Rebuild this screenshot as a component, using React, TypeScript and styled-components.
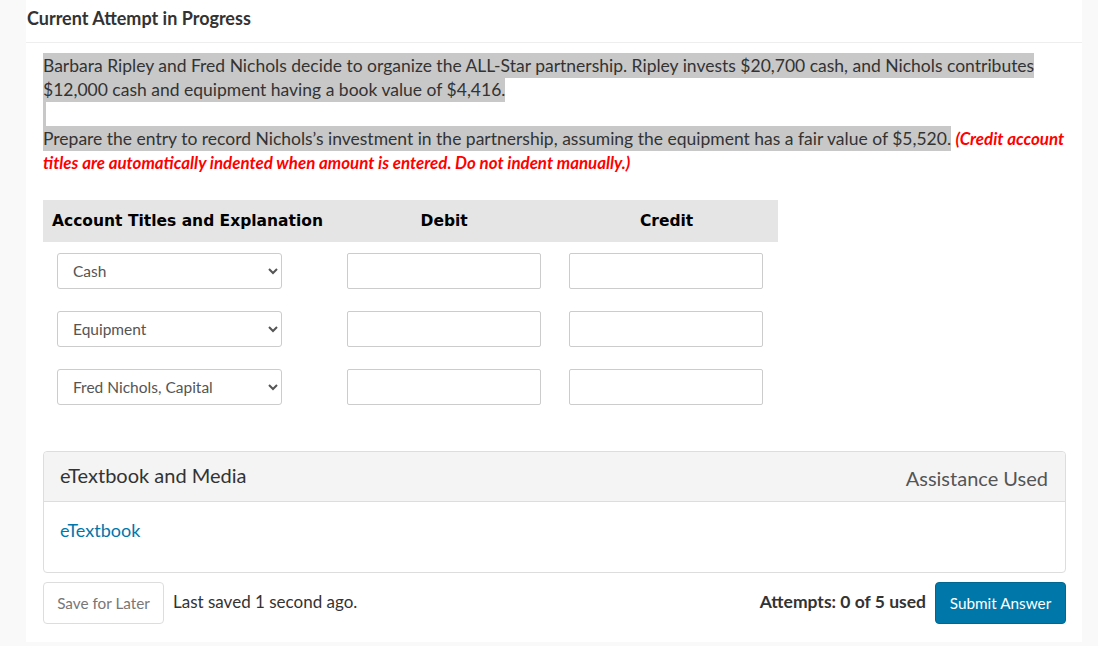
import React from "react";
import styled, { createGlobalStyle } from "styled-components";

const GlobalStyle = createGlobalStyle`
  body {
    margin: 0;
    background: #f9f9f9;
    font-family: Lato, "Open Sans", sans-serif;
    color: #333;
  }
`;

const Card = styled.div`
  width: 1056px;
  margin-left: 26px;
  background: #fff;
  padding-bottom: 18px;
`;

const CardHeader = styled.div`
  height: 35px;
  padding: 7px 1px 0;
  border-bottom: 1px solid #eee;
  font-size: 18px;
  font-weight: 700;
  color: #333;
`;

const CardBody = styled.div`
  padding: 11px 16px 0 17px;
`;

const Question = styled.div`
  font-size: 17.5px;
  line-height: 24px;
  color: #333;
`;

const Marked = styled.span`
  background: #c8c8c8;
  padding: 2px 0;
  box-decoration-break: clone;
  -webkit-box-decoration-break: clone;
`;

const Gap = styled.div<{ $bar?: boolean }>`
  height: 25px;
  width: 3px;
  background: ${(p) => (p.$bar ? "#c8c8c8" : "transparent")};
`;

const Hint = styled.span`
  color: #f00;
  font-size: 16.9px;
  font-style: italic;
  font-weight: 700;
`;

const Table = styled.table`
  margin-top: 25px;
  border-collapse: collapse;
  width: 735px;
`;

const Th = styled.th<{ $w: number; $align?: string }>`
  width: ${(p) => p.$w}px;
  height: 42px;
  background: #e5e5e5;
  font-family: "DejaVu Sans", Verdana, sans-serif;
  font-size: 15.5px;
  font-weight: 700;
  color: #000;
  text-align: ${(p) => p.$align || "center"};
  padding: 0 0 0 ${(p) => (p.$align === "left" ? 9 : 0)}px;
`;

const Td = styled.td`
  padding: 11px 14px;
`;

const Select = styled.select`
  width: 225px;
  height: 36px;
  border: 1px solid #ccc;
  border-radius: 3px;
  background: #fff;
  padding: 0 10px 0 11px;
  font-family: Lato, sans-serif;
  font-size: 15.5px;
  color: #555;
`;

const Amount = styled.input`
  box-sizing: border-box;
  width: 194px;
  height: 36px;
  border: 1px solid #ccc;
  border-radius: 2px;
  background: #fff;
  padding: 0 8px;
`;

const Panel = styled.div`
  margin-top: 35px;
  border: 1px solid #ddd;
  border-radius: 4px;
`;

const PanelHead = styled.div`
  height: 49px;
  background: #f4f4f4;
  border-bottom: 1px solid #ddd;
  display: flex;
  justify-content: space-between;
  align-items: center;
  padding: 0 17px 0 16px;
  border-radius: 4px 4px 0 0;
`;

const PanelTitle = styled.span`
  font-size: 20px;
  color: #333;
  margin-top: -4px;
`;

const Assist = styled.span`
  font-size: 20px;
  color: #555;
  margin-top: 2px;
`;

const PanelBody = styled.div`
  height: 70px;
  padding: 0 16px;
  display: flex;
  align-items: center;
`;

const Link = styled.a`
  font-size: 18px;
  color: #0077aa;
  text-decoration: none;
  margin-top: -14px;
`;

const Footer = styled.div`
  margin-top: 9px;
  display: flex;
  align-items: center;
`;

const SaveBtn = styled.button`
  width: 121px;
  height: 42px;
  border: 1px solid #ddd;
  border-radius: 4px;
  background: #fff;
  font-family: Lato, sans-serif;
  font-size: 15.3px;
  color: #777;
  padding: 0;
`;

const Saved = styled.span`
  font-size: 17px;
  color: #333;
  margin-left: 9px;
  margin-top: -3px;
`;

const Attempts = styled.span`
  margin-left: auto;
  font-size: 17.5px;
  font-weight: 700;
  color: #333;
  margin-right: 9px;
  margin-top: -3px;
`;

const SubmitBtn = styled.button`
  width: 131px;
  height: 42px;
  border: 1px solid #006890;
  border-radius: 4px;
  background: #0077a9;
  font-family: Lato, sans-serif;
  font-size: 15.3px;
  color: #fff;
  padding: 0;
`;

const rows = ["Cash", "Equipment", "Fred Nichols, Capital"];

export default function App() {
  return (
    <>
      <GlobalStyle />
      <Card>
        <CardHeader>Current Attempt in Progress</CardHeader>
        <CardBody>
          <Question>
            <Marked>
              Barbara Ripley and Fred Nichols decide to organize the ALL-Star partnership. Ripley invests $20,700 cash, and Nichols contributes
              $12,000 cash and equipment having a book value of $4,416.
            </Marked>
            <Gap $bar />
            <Marked>
              Prepare the entry to record Nichols’s investment in the partnership, assuming the equipment has a fair value of $5,520.
            </Marked>{" "}
            <Hint>(Credit account titles are automatically indented when amount is entered. Do not indent manually.)</Hint>
          </Question>
          <Table>
            <thead>
              <tr>
                <Th $w={290} $align="left">Account Titles and Explanation</Th>
                <Th $w={222}>Debit</Th>
                <Th $w={223}>Credit</Th>
              </tr>
            </thead>
            <tbody>
              {rows.map((r) => (
                <tr key={r}>
                  <Td>
                    <Select defaultValue={r}>
                      <option>{r}</option>
                    </Select>
                  </Td>
                  <Td>
                    <Amount />
                  </Td>
                  <Td>
                    <Amount />
                  </Td>
                </tr>
              ))}
            </tbody>
          </Table>
          <Panel>
            <PanelHead>
              <PanelTitle>eTextbook and Media</PanelTitle>
              <Assist>Assistance Used</Assist>
            </PanelHead>
            <PanelBody>
              <Link href="#">eTextbook</Link>
            </PanelBody>
          </Panel>
          <Footer>
            <SaveBtn>Save for Later</SaveBtn>
            <Saved>Last saved 1 second ago.</Saved>
            <Attempts>Attempts: 0 of 5 used</Attempts>
            <SubmitBtn>Submit Answer</SubmitBtn>
          </Footer>
        </CardBody>
      </Card>
    </>
  );
}
